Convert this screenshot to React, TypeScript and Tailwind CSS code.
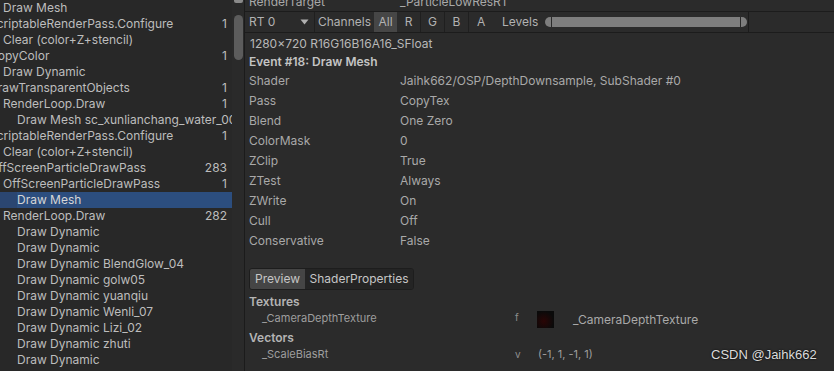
type Row = { t: string; l: number; c?: string; sel?: boolean };

const rows: Row[] = [
  { t: 'Draw Mesh', l: 1 },
  { t: 'ScriptableRenderPass.Configure', l: 0, c: '1' },
  { t: 'Clear (color+Z+stencil)', l: 1 },
  { t: 'CopyColor', l: 0, c: '1' },
  { t: 'Draw Dynamic', l: 1 },
  { t: 'DrawTransparentObjects', l: 0, c: '1' },
  { t: 'RenderLoop.Draw', l: 1, c: '1' },
  { t: 'Draw Mesh sc_xunlianchang_water_00', l: 2 },
  { t: 'ScriptableRenderPass.Configure', l: 0, c: '1' },
  { t: 'Clear (color+Z+stencil)', l: 1 },
  { t: 'OffScreenParticleDrawPass', l: 0, c: '283' },
  { t: 'OffScreenParticleDrawPass', l: 1, c: '1' },
  { t: 'Draw Mesh', l: 2, sel: true },
  { t: 'RenderLoop.Draw', l: 1, c: '282' },
  { t: 'Draw Dynamic', l: 2 },
  { t: 'Draw Dynamic', l: 2 },
  { t: 'Draw Dynamic BlendGlow_04', l: 2 },
  { t: 'Draw Dynamic golw05', l: 2 },
  { t: 'Draw Dynamic yuanqiu', l: 2 },
  { t: 'Draw Dynamic Wenli_07', l: 2 },
  { t: 'Draw Dynamic Lizi_02', l: 2 },
  { t: 'Draw Dynamic zhuti', l: 2 },
  { t: 'Draw Dynamic', l: 2 },
];

const indent = ['-ml-[11px]', 'pl-[3px]', 'pl-[17px]'];

const state: [string, string][] = [
  ['Shader', 'Jaihk662/OSP/DepthDownsample, SubShader #0'],
  ['Pass', 'CopyTex'],
  ['Blend', 'One Zero'],
  ['ColorMask', '0'],
  ['ZClip', 'True'],
  ['ZTest', 'Always'],
  ['ZWrite', 'On'],
  ['Cull', 'Off'],
  ['Conservative', 'False'],
];

const EventList = () => (
  <div className="w-[232px] shrink-0 overflow-hidden bg-[#282828]">
    <div className="flex flex-col">
      {rows.map((r, i) => (
        <div
          key={i}
          className={
            'relative flex h-[16px] items-center whitespace-nowrap ' +
            (r.sel ? 'bg-[#2c4e7f] text-[#d6d6d6]' : 'text-[#bdbdbd]')
          }
        >
          {r.sel && <div className="h-full w-[17px] shrink-0 bg-[#2b4671]" />}
          <span className={r.sel ? '' : indent[r.l]}>{r.t}</span>
          {r.c && (
            <span className="absolute right-0 top-0 h-full bg-[#282828] pl-1 pr-[5px] leading-[16px]">{r.c}</span>
          )}
        </div>
      ))}
    </div>
  </div>
);

const Toolbar = () => (
  <div className="flex h-[22px] border-y border-[#1c1c1c] text-[#b2b2b2]">
    <div className="flex w-[504px] items-center border-r border-[#1c1c1c]">
      <div className="flex h-full w-[70px] items-center justify-between border-r border-[#1f1f1f] pl-[4px] pr-[5px]">
        <span>RT 0</span>
        <svg width="9" height="6" viewBox="0 0 9 6">
          <path d="M0.5 0.5h8L4.5 5.5z" fill="#b0b0b0" />
        </svg>
      </div>
      <span className="px-[3px]">Channels</span>
      <div className="flex h-full w-[23px] items-center justify-center bg-[#464646]">All</div>
      {['R', 'G', 'B', 'A'].map((c, i) => (
        <div
          key={c}
          className={
            'flex h-full w-[24px] items-center justify-center border-[#1f1f1f] ' + (i < 3 ? 'border-r' : '')
          }
        >
          {c}
        </div>
      ))}
      <span className="ml-[9px]">Levels</span>
      <div className="ml-[7px] flex h-[10px] w-[202px] items-center justify-between rounded-full bg-[#7e7e7e] px-[6px]">
        <div className="h-full w-px bg-[#2a2a2a]" />
        <div className="h-full w-px bg-[#2a2a2a]" />
      </div>
    </div>
  </div>
);

const Details = () => (
  <div className="relative flex min-w-0 flex-1 flex-col overflow-hidden bg-[#2b2b2b] text-[#a9a9a9]">
    <div className="h-[11px] overflow-hidden">
      <div className="-mt-[6px] flex h-[16px] items-center pl-[4px]">
        <span className="w-[151px]">RenderTarget</span>
        <span>_ParticleLowResRT</span>
      </div>
    </div>
    <Toolbar />
    <div className="mt-[2px] flex h-[18px] items-center pl-[5px] text-[#b8b8b8]">1280x720 R16G16B16A16_SFloat</div>
    <div className="flex h-[18px] items-center pl-[4px] font-semibold text-[#c4c4c4]">Event #18: Draw Mesh</div>
    {state.map(([k, v]) => (
      <div key={k} className="flex h-[20px] items-center pl-[4px]">
        <span className="w-[151px]">{k}</span>
        <span>{v}</span>
      </div>
    ))}
    <div className="ml-[4px] mt-[17px] flex h-[22px] w-[165px] overflow-hidden rounded-[3px] border border-[#1d1d1d]">
      <div className="flex w-[55px] items-center justify-center bg-[#454545] text-[#c6c6c6]">Preview</div>
      <div className="flex flex-1 items-center justify-center bg-[#242424] text-[#c6c6c6]">ShaderProperties</div>
    </div>
    <div className="mt-[4px] flex h-[16px] items-center pl-[4px] font-semibold text-[#b4b4b4]">Textures</div>
    <div className="flex h-[20px] items-start">
      <span className="w-[270px] pl-[17px] text-[11px] leading-[16px] text-[#9e9e9e]">_CameraDepthTexture</span>
      <span className="w-[22px] text-[10px] leading-[14px] text-[#8e8e8e]">f</span>
      <div className="mt-px h-[17px] w-[17px] bg-[radial-gradient(circle_at_40%_60%,#2a0505,#0a0a0a_70%)]" />
      <span className="ml-[19px] leading-[20px] text-[#a9a9a9]">_CameraDepthTexture</span>
    </div>
    <div className="flex h-[16px] items-center pl-[4px] font-semibold text-[#b4b4b4]">Vectors</div>
    <div className="flex h-[16px] items-center">
      <span className="w-[270px] pl-[17px] text-[11px] text-[#9e9e9e]">_ScaleBiasRt</span>
      <span className="w-[23px] text-[10px] text-[#8e8e8e]">v</span>
      <span className="text-[11px] text-[#9e9e9e]">(-1, 1, -1, 1)</span>
    </div>
    <div className="absolute left-[466px] top-[346px] font-['Liberation_Sans',Arial,sans-serif] text-[13px] leading-[18px] text-[#dcdcdc] [text-shadow:0_0_2px_#000]">
      CSDN @Jaihk662
    </div>
  </div>
);

export default function App() {
  return (
    <div className="flex h-[371px] w-[834px] overflow-hidden bg-[#282828] font-['Inter',sans-serif] text-[12px]">
      <EventList />
      <div className="relative w-[12px] shrink-0 bg-[#2a2a2a]">
        <div className="absolute left-[2px] top-0 h-[3px] w-[9px] rounded-b-[2px] bg-[#8a8a8a]" />
        <div className="absolute left-[2px] top-[15px] h-[45px] w-[9px] rounded-full bg-[#5c5c5c]" />
      </div>
      <div className="w-px shrink-0 bg-[#1b1b1b]" />
      <Details />
    </div>
  );
}
